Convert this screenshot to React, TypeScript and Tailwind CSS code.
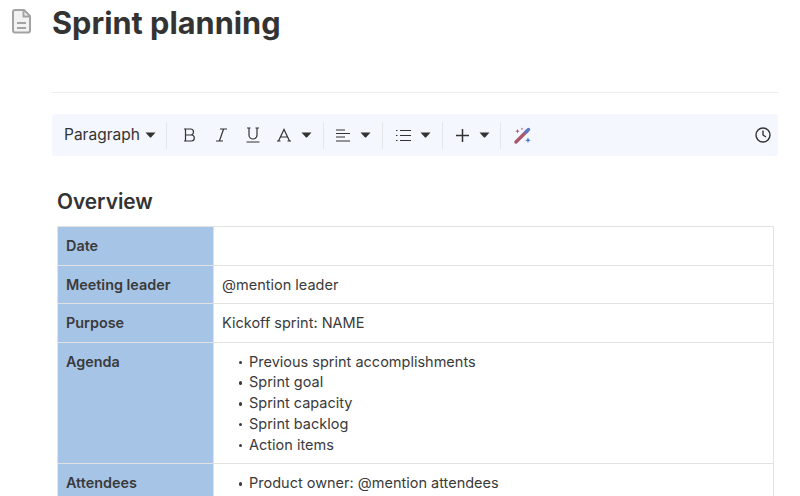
const Caret = ({ className = "" }: { className?: string }) => (
  <svg width="11" height="6" viewBox="0 0 11 6" className={className}>
    <path d="M0.5 0.5h10L6.2 5.2a1 1 0 0 1-1.4 0z" fill="#333" />
  </svg>
);
const Sep = () => <div className="w-px h-[27px] bg-[#e4e6e8]" />;

const Row = ({ label, h, children }: { label: string; h: string; children?: React.ReactNode }) => (
  <tr className={h}>
    <th className="w-[156px] bg-[#a6c5e6] border border-[#e2e2e2] align-top text-left font-semibold text-[14.4px] px-2 pt-[9px] pb-0">{label}</th>
    <td className="border border-[#e2e2e2] align-top px-2 pt-[9px] pb-0">{children}</td>
  </tr>
);

const Item = ({ children }: { children: React.ReactNode }) => (
  <li className="relative before:content-[''] before:absolute before:left-[-10.5px] before:top-[9px] before:w-[3.5px] before:h-[3.5px] before:rounded-full before:bg-[#3a3a3a]">{children}</li>
);

const items = ["Previous sprint accomplishments", "Sprint goal", "Sprint capacity", "Sprint backlog", "Action items"];

export default function App() {
  return (
    <div className="w-[800px] h-[496px] overflow-hidden bg-white text-[#3a3a3a] font-['Inter',sans-serif] flex">
      <div className="w-[52px] shrink-0 pl-[12px] pt-[9px]">
        <svg width="19" height="25" viewBox="0 0 19 25" fill="none">
          <path d="M3 1h9L18 7V21.5a2 2 0 0 1-2 2H3a2 2 0 0 1-2-2V3a2 2 0 0 1 2-2z" fill="#f2f2f2" stroke="#a3a3a3" strokeWidth="2" />
          <path d="M11.5 1.5V7.5h6" stroke="#a3a3a3" strokeWidth="2" fill="none" />
          <path d="M5 14h9M5 19h9" stroke="#a3a3a3" strokeWidth="2" />
        </svg>
      </div>
      <div className="w-[726px] shrink-0">
        <h1 className="text-[30.7px] leading-[46px] font-bold text-[#333] h-[92px]">Sprint planning</h1>
        <div className="h-px bg-[#ececec] mb-[21px]" />
        <div className="h-[42px] bg-[#f4f7fd] rounded-[3px] flex items-center pl-3 pr-[7px] text-[#333]">
          <span className="text-[15.5px]">Paragraph</span>
          <Caret className="ml-[5px]" />
          <div className="ml-[10px]"><Sep /></div>
          <svg width="13" height="14" viewBox="0 0 13 14" fill="none" stroke="#333" strokeWidth="1.2" className="ml-[16px]">
            <path d="M2.5 1h5a3 3 0 0 1 0 6h-5zM2.5 7h5.8a3 3 0 0 1 0 6H2.5zM2.5 1v12M1 1h2M1 13h2" />
          </svg>
          <svg width="13" height="14" viewBox="0 0 13 14" fill="none" stroke="#333" strokeWidth="1.2" className="ml-[19px]">
            <path d="M5 1h7M1 13h7M8.6 1L4.4 13" />
          </svg>
          <svg width="14" height="16" viewBox="0 0 14 16" fill="none" stroke="#333" strokeWidth="1.2" className="ml-[18px]">
            <path d="M3 1v7a4 4 0 0 0 8 0V1M1 1h3.5M9.5 1H13M0.5 15h13" />
          </svg>
          <svg width="14" height="14" viewBox="0 0 14 14" fill="none" stroke="#333" strokeWidth="1.2" className="ml-[17px]">
            <path d="M1.5 13L7 1.5 12.5 13M3.5 9h7M0 13h3.5M10.5 13h3.5" />
          </svg>
          <Caret className="ml-[10px]" />
          <div className="ml-[11px]"><Sep /></div>
          <svg width="14" height="13" viewBox="0 0 14 13" fill="none" stroke="#333" strokeWidth="1.1" className="ml-[12px]">
            <path d="M0 1h9M0 4.5h14M0 8h9M0 12h14" />
          </svg>
          <Caret className="ml-[10px]" />
          <div className="ml-[11px]"><Sep /></div>
          <svg width="15" height="13" viewBox="0 0 15 13" fill="none" stroke="#333" strokeWidth="1.1" className="ml-[13px]">
            <path d="M4 1.5h11M4 6.5h11M4 11.5h11M0 1.5h1.5M0 6.5h1.5M0 11.5h1.5" />
          </svg>
          <Caret className="ml-[9px]" />
          <div className="ml-[11px]"><Sep /></div>
          <svg width="13" height="13" viewBox="0 0 13 13" fill="none" stroke="#333" strokeWidth="1.5" className="ml-[13px]">
            <path d="M6.5 0v13M0 6.5h13" />
          </svg>
          <Caret className="ml-[10px]" />
          <div className="ml-[10px]"><Sep /></div>
          <svg width="18" height="17" viewBox="0 0 18 17" fill="none" className="ml-[13px]">
            <path d="M2 15L13 4" stroke="#a8586c" strokeWidth="3.4" strokeLinecap="round" />
            <path d="M12 5l2.5-2.5" stroke="#5a78c8" strokeWidth="3.4" strokeLinecap="round" />
            <path d="M14 10.5l.8 2 2 .8-2 .8-.8 2-.8-2-2-.8 2-.8z" fill="#3f74d6" />
            <path d="M3.5 2l.6 1.6 1.6.6-1.6.6-.6 1.6-.6-1.6-1.6-.6 1.6-.6z" fill="#a8586c" />
            <path d="M8 .5l.4 1 1 .4-1 .4-.4 1-.4-1-1-.4 1-.4z" fill="#a8586c" />
          </svg>
          <svg width="16" height="16" viewBox="0 0 16 16" fill="none" stroke="#333" strokeWidth="1.4" className="ml-auto">
            <circle cx="8" cy="8" r="7" />
            <path d="M8 3.5V8l3 2" />
          </svg>
        </div>
        <div className="pl-[5px] pr-[4px]">
          <h2 className="text-[20.8px] leading-[30px] font-semibold mt-[31px] mb-[9px] text-[#333]">Overview</h2>
          <table className="w-[717px] border-collapse table-fixed text-[14.5px] leading-[20.8px]">
            <tbody>
              <Row label="Date" h="h-[39px]" />
              <Row label="Meeting leader" h="h-[38px]">@mention leader</Row>
              <Row label="Purpose" h="h-[39px]">Kickoff sprint: NAME</Row>
              <Row label="Agenda" h="h-[121px]">
                <ul className="pl-[27px] -mt-[0.5px]">
                  {items.map((t) => <Item key={t}>{t}</Item>)}
                </ul>
              </Row>
              <Row label="Attendees" h="h-[60px]">
                <ul className="pl-[27px]">
                  <Item>Product owner: @mention attendees</Item>
                </ul>
              </Row>
            </tbody>
          </table>
        </div>
      </div>
    </div>
  );
}
